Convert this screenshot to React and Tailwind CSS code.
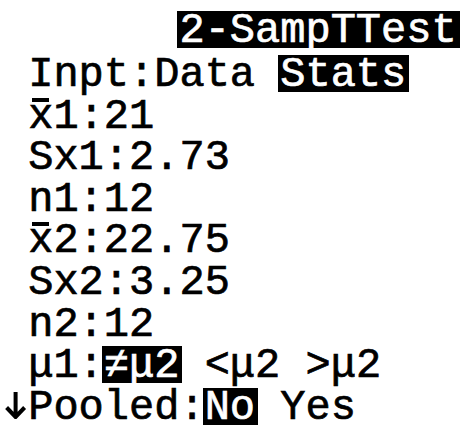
const Hi = ({ children }) => (
  <span className="inline-block h-[37px] leading-[41.6px] bg-black text-white pl-[2px] pr-[3px] -ml-[2px] -mr-[3px] align-baseline">
    {children}
  </span>
);

// x with a bar on top, as the calculator prints x-bar
const XBar = () => (
  <span className="relative">
    x
    <span className="absolute left-[4px] top-[5px] w-[17px] h-[4px] bg-black" />
  </span>
);

// down arrow in the first column, marks that the list scrolls on
const DownArrow = () => (
  <svg viewBox="0 0 25 28" className="inline-block w-[25.2px] h-[28px] align-baseline">
    <path d="M12.5 1V26M3.5 16.5L12.5 26L21.5 16.5" fill="none" stroke="black" strokeWidth="4" />
  </svg>
);

const Row = ({ children, title }) => (
  <div className={`whitespace-pre ${title ? "h-[44px]" : "h-[41.6px]"} leading-[41.6px]`}>
    {children}
  </div>
);

export default function App() {
  return (
    <div
      className="w-[474px] h-[434px] bg-white text-black overflow-hidden pl-[3px] pt-[11px] text-[42px] [-webkit-text-stroke:0.7px_currentColor]"
      style={{ fontFamily: '"Liberation Mono", "DejaVu Sans Mono", monospace' }}
    >
      <Row title>
        {"       "}
        <Hi>2-SampTTest</Hi>
      </Row>
      <Row>
        {" Inpt:Data "}
        <Hi>Stats</Hi>
      </Row>
      <Row>
        {" "}
        <XBar />
        {"1:21"}
      </Row>
      <Row>{" Sx1:2.73"}</Row>
      <Row>{" n1:12"}</Row>
      <Row>
        {" "}
        <XBar />
        {"2:22.75"}
      </Row>
      <Row>{" Sx2:3.25"}</Row>
      <Row>{" n2:12"}</Row>
      <Row>
        {" μ1:"}
        <Hi>≠μ2</Hi>
        {" <μ2 >μ2"}
      </Row>
      <Row>
        <DownArrow />
        {"Pooled:"}
        <Hi>No</Hi>
        {" Yes"}
      </Row>
    </div>
  );
}
